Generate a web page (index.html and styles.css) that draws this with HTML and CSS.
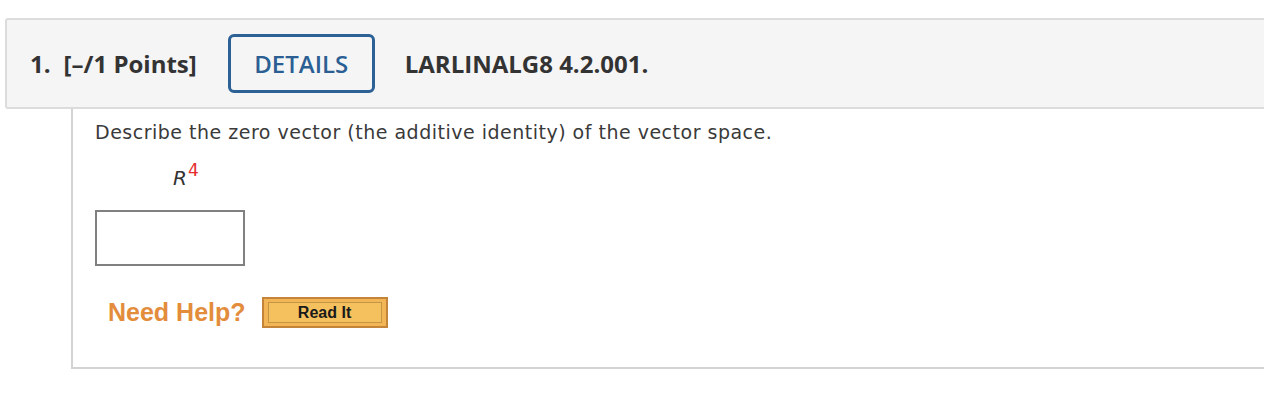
FILE: index.html
```html
<!DOCTYPE html>
<html lang="en">
<head>
<meta charset="utf-8">
<title>Question 1</title>
<link rel="stylesheet" href="styles.css">
</head>
<body>
<div class="question">
  <div class="q-header">
    <span class="q-num">1.</span>
    <span class="q-points">[–/1 Points]</span>
    <button class="details" type="button">DETAILS</button>
    <span class="q-code">LARLINALG8 4.2.001.</span>
  </div>
  <div class="q-body">
    <p class="prompt">Describe the zero vector (the additive identity) of the vector space.</p>
    <div class="space"><i class="var">R</i><sup class="exp">4</sup></div>
    <input class="answer" type="text" aria-label="answer">
    <div class="help">
      <span class="need-help">Need Help?</span>
      <button class="read-it" type="button"><span class="read-it-inner">Read It</span></button>
    </div>
  </div>
</div>
</body>
</html>
```

FILE: styles.css
```css
html, body {
  margin: 0;
  padding: 0;
  overflow: hidden;
  background: #ffffff;
}

.question {
  margin: 18px 0 0 5px;
  width: 1400px;
}

.q-header {
  display: flex;
  align-items: center;
  height: 87px;
  padding-left: 23px;
  background: #f5f5f5;
  border: 2px solid #dcdcdc;
  border-radius: 3px;
  font-family: "Open Sans", "Liberation Sans", sans-serif;
  color: #333333;
}

.q-num {
  font-size: 24px;
  font-weight: 700;
  margin-right: 13px;
}

.q-points {
  font-size: 24px;
  font-weight: 700;
}

.details {
  box-sizing: border-box;
  width: 147px;
  height: 59px;
  margin-left: 31px;
  border: 3px solid #2c6196;
  border-radius: 6px;
  background: transparent;
  color: #2b5f93;
  font-family: "Open Sans", "Liberation Sans", sans-serif;
  font-size: 24px;
  font-weight: 600;
  padding: 0;
}

.q-code {
  margin-left: 30px;
  font-size: 24px;
  font-weight: 700;
}

.q-body {
  margin-left: 66px;
  height: 260px;
  box-sizing: border-box;
  padding: 12px 0 0 22px;
  border-left: 2px solid #d3d3d3;
  border-bottom: 2px solid #d3d3d3;
  font-family: "DejaVu Sans", Verdana, sans-serif;
  color: #3a3a3a;
}

.prompt {
  margin: 0;
  font-size: 19px;
  letter-spacing: 0.5px;
  line-height: 22px;
}

.space {
  margin-top: 23px;
  padding-left: 78px;
  font-size: 20px;
  line-height: 24px;
  color: #333333;
}

.var {
  font-style: italic;
}

.exp {
  color: #e52a2a;
  font-size: 17px;
  line-height: 0;
  vertical-align: 9px;
  margin-left: 1px;
}

.answer {
  display: block;
  box-sizing: border-box;
  width: 150px;
  height: 56px;
  margin-top: 20px;
  border: 2px solid #808080;
  border-radius: 0;
  background: #ffffff;
  padding: 0;
}

.help {
  display: flex;
  align-items: center;
  gap: 16px;
  margin-top: 31px;
  padding-left: 13px;
}

.need-help {
  font-family: "Liberation Sans", Arial, sans-serif;
  font-weight: 700;
  font-size: 25px;
  color: #e38d3c;
}

.read-it {
  box-sizing: border-box;
  width: 126px;
  height: 31px;
  padding: 3px 4px;
  border: 2px solid #c4843a;
  background: #f2b656;
  display: flex;
  cursor: pointer;
}

.read-it-inner {
  flex: 1;
  display: flex;
  align-items: center;
  justify-content: center;
  border: 1px solid #c49545;
  background: #f4c15e;
  font-family: "Liberation Sans", Arial, sans-serif;
  font-weight: 700;
  font-size: 16px;
  color: #1a1a1a;
}
```
